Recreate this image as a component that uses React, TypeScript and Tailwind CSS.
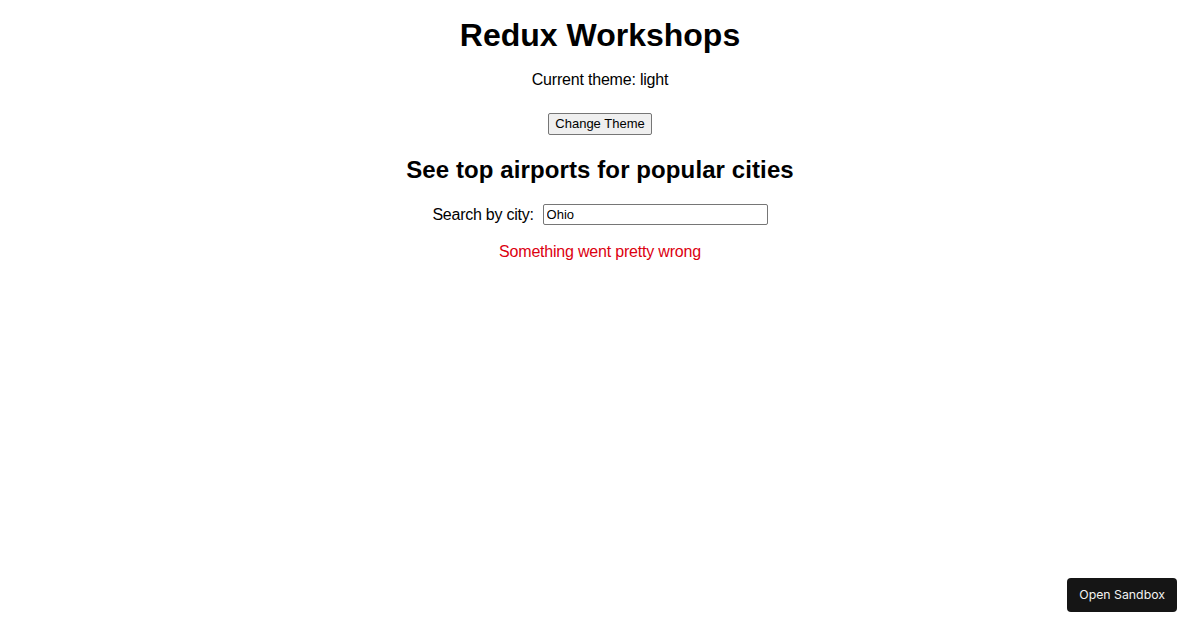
export default function App() {
  return (
    <div className="relative min-h-[630px] bg-white text-black font-['Liberation_Sans',Arial,sans-serif]">
      <div className="flex flex-col items-center pt-[17px] text-center">
        <h1 className="text-[32px] font-bold leading-[37px]">Redux Workshops</h1>
        <p className="mt-[17px] text-[16px] leading-[18px] tracking-[-0.2px]">Current theme: light</p>
        <button className="mt-[24px] h-[22px] px-[6px] text-[13px] leading-[16px] bg-[#efefef] border border-[#767676] rounded-[2px]">
          Change Theme
        </button>
        <h2 className="mt-[21px] text-[24px] font-bold leading-[28px] tracking-[0.1px]">See top airports for popular cities</h2>
        <div className="mt-[20px] flex items-center gap-[9px] text-[16px] leading-[18px] tracking-[-0.25px]">
          <label htmlFor="city">Search by city:</label>
          <input
            id="city"
            defaultValue="Ohio"
            className="w-[225px] h-[21px] px-[3px] text-[13px] tracking-normal border border-[#767676] rounded-[2px] font-['Liberation_Sans',Arial,sans-serif]"
          />
        </div>
        <p className="mt-[18px] text-[16px] leading-[18px] tracking-[-0.2px] text-[#dc0010]">Something went pretty wrong</p>
      </div>
      <div className="absolute right-[23px] bottom-[18px] h-[34px] px-[12px] flex items-center rounded-[4px] bg-[#151515] text-[#f2f2f2] text-[12.3px] font-['Inter',sans-serif]">
        Open Sandbox
      </div>
    </div>
  );
}
